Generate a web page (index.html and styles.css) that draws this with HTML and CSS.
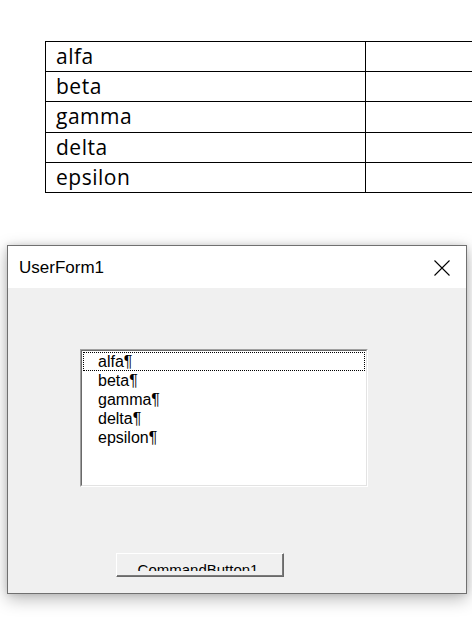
FILE: index.html
```html
<!DOCTYPE html>
<html>
<head>
<meta charset="utf-8">
<link rel="stylesheet" href="styles.css">
</head>
<body>
<div class="doc">
  <div class="tbl">
    <div class="row"><div class="c1">alfa</div><div class="c2"></div></div>
    <div class="row"><div class="c1">beta</div><div class="c2"></div></div>
    <div class="row"><div class="c1">gamma</div><div class="c2"></div></div>
    <div class="row"><div class="c1">delta</div><div class="c2"></div></div>
    <div class="row"><div class="c1">epsilon</div><div class="c2"></div></div>
  </div>
</div>
<div class="win">
  <div class="titlebar">
    <span class="title">UserForm1</span>
    <svg class="close" width="16" height="16" viewBox="0 0 16 16"><path d="M0.5 0.5 L15.5 15.5 M15.5 0.5 L0.5 15.5" stroke="#000" stroke-width="1.1" fill="none"/></svg>
  </div>
  <div class="client">
    <div class="listbox">
      <div class="listinner">
        <div class="item focus">alfa¶</div>
        <div class="item">beta¶</div>
        <div class="item">gamma¶</div>
        <div class="item">delta¶</div>
        <div class="item">epsilon¶</div>
      </div>
    </div>
    <div class="btn"><div class="btnlabel">CommandButton1</div></div>
  </div>
</div>
</body>
</html>
```
FILE: styles.css
```css
html, body {
  margin: 0;
  padding: 0;
  background: #fff;
  overflow: hidden;
  width: 472px;
  height: 617px;
}
.doc {
  padding: 41px 0 0 45px;
}
.tbl {
  width: 700px;
  border-top: 1px solid #000;
  border-left: 1px solid #000;
  font-family: "Open Sans", sans-serif;
  font-size: 21px;
  letter-spacing: 0.5px;
  color: #000;
}
.row {
  display: flex;
  height: 30.2px;
  box-sizing: border-box;
  border-bottom: 1px solid #000;
}
.c1 {
  width: 320px;
  border-right: 1px solid #000;
  padding-left: 10px;
  line-height: 28px;
  box-sizing: border-box;
}
.c2 {
  flex: 1;
}
.win {
  margin: 52px 0 0 7px;
  width: 460px;
  height: 349px;
  box-sizing: border-box;
  border: 1px solid #707070;
  background: #f0f0f0;
  box-shadow: 0 5px 16px rgba(0,0,0,0.28), 0 0 6px rgba(0,0,0,0.12);
  display: flex;
  flex-direction: column;
}
.titlebar {
  height: 42px;
  background: #fff;
  display: flex;
  align-items: center;
  justify-content: space-between;
  padding: 0 16px 0 11px;
}
.title {
  font-family: "Liberation Sans", sans-serif;
  font-size: 17px;
  color: #000;
  padding-top: 2px;
}
.close {
  display: block;
  margin-top: 2px;
}
.client {
  flex: 1;
  padding: 61px 0 0 72px;
}
.listbox {
  width: 288px;
  height: 138px;
  box-sizing: border-box;
  border: 1px solid;
  border-color: #a0a0a0 #ffffff #ffffff #a0a0a0;
}
.listinner {
  height: 100%;
  box-sizing: border-box;
  border: 1px solid;
  border-color: #696969 #e3e3e3 #e3e3e3 #696969;
  background: #fff;
  padding: 1px 1px 0 1px;
}
.item {
  font-family: "Liberation Sans", sans-serif;
  font-size: 16px;
  line-height: 19px;
  height: 19px;
  padding-left: 15px;
  color: #000;
  box-sizing: border-box;
}
.item.focus {
  outline: 1px dotted #000;
  outline-offset: -1px;
}
.btn {
  margin: 66px 0 0 36px;
  width: 168px;
  height: 24px;
  box-sizing: border-box;
  border-top: 1px solid #fff;
  border-left: 1px solid #fff;
  border-right: 1px solid #696969;
  border-bottom: 1px solid #696969;
  box-shadow: inset -1px -1px 0 #7a7a7a;
  background: #f0f0f0;
}
.btnlabel {
  height: 17px;
  overflow: hidden;
  box-sizing: border-box;
  padding-top: 7px;
  padding-right: 4px;
  font-family: "Liberation Sans", sans-serif;
  font-size: 15px;
  line-height: 17px;
  text-align: center;
  color: #000;
}
```
